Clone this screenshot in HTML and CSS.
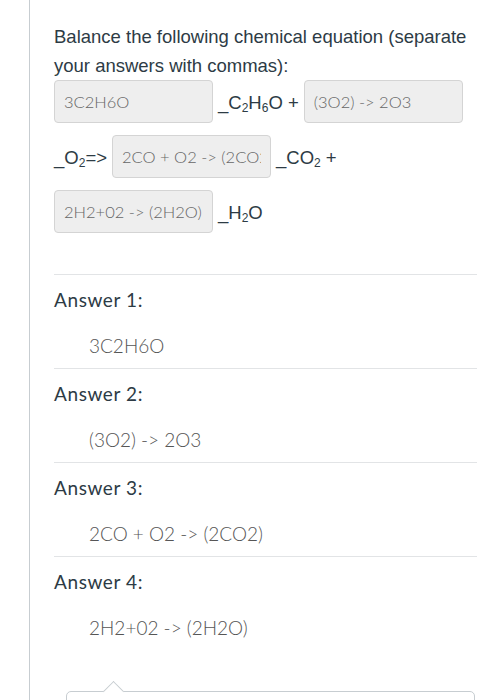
FILE: index.html
```html
<!DOCTYPE html>
<html lang="en">
<head>
    <meta charset="UTF-8">
    <meta name="viewport" content="width=device-width, initial-scale=1.0">
    <title>Quiz Question</title>
    <link rel="stylesheet" href="styles.css">
</head>
<body>
    <div class="page">
        <div class="question">
            <p class="prompt">Balance the following chemical equation (separate your answers with commas):</p>
            <div class="equation">
                <input class="blank" type="text" value="3C2H6O" disabled>
                <span class="term">_C<sub>2</sub>H<sub>6</sub>O +</span>
                <input class="blank" type="text" value="(3O2) -> 2O3" disabled>
                <span class="term">_O<sub>2</sub>=&gt;</span>
                <input class="blank" type="text" value="2CO + O2 -> (2CO2)" disabled>
                <span class="term">_CO<sub>2</sub> +</span>
                <input class="blank" type="text" value="2H2+02 -> (2H2O)" disabled>
                <span class="term">_H<sub>2</sub>O</span>
            </div>
        </div>

        <div class="answers">
            <div class="answer">
                <div class="answer-label">Answer 1:</div>
                <div class="answer-value">3C2H6O</div>
            </div>
            <div class="answer">
                <div class="answer-label">Answer 2:</div>
                <div class="answer-value">(3O2) -&gt; 2O3</div>
            </div>
            <div class="answer">
                <div class="answer-label">Answer 3:</div>
                <div class="answer-value">2CO + O2 -&gt; (2CO2)</div>
            </div>
            <div class="answer">
                <div class="answer-label">Answer 4:</div>
                <div class="answer-value">2H2+02 -&gt; (2H2O)</div>
            </div>
        </div>

        <div class="popover"></div>
    </div>
</body>
</html>
```

FILE: styles.css
```css
body {
    margin: 0;
    background-color: #ffffff;
    font-family: 'Liberation Sans', Arial, sans-serif;
    color: #2d3b45;
    overflow: hidden;
}
.page {
    margin-left: 29px;
    border-left: 1px solid #c7cdd1;
    padding-left: 24px;
    width: 443px;
    height: 700px;
    box-sizing: border-box;
}
.prompt {
    margin: 0;
    padding-top: 22px;
    font-size: 18.5px;
    line-height: 29px;
    color: #2d3b45;
}
.equation {
    display: flex;
    flex-wrap: wrap;
    align-items: center;
    column-gap: 5px;
    row-gap: 12px;
}
.blank {
    box-sizing: border-box;
    width: 159px;
    height: 43px;
    padding: 0 9px;
    background-color: #eeeeee;
    border: 1px solid #d4d4d4;
    border-radius: 4px;
    font-family: Lato, sans-serif;
    font-weight: 300;
    font-size: 16.5px;
    color: #666666;
    -webkit-text-fill-color: #666666;
    opacity: 1;
}
.term {
    font-size: 18.5px;
    color: #2d3b45;
    padding-top: 3px;
}
.term sub {
    font-size: 12px;
    vertical-align: -3px;
    line-height: 0;
}
.answers {
    margin-top: 41px;
    margin-right: -10px;
}
.answer {
    border-top: 1px solid #e2e4e6;
    padding: 13px 0 10px;
}
.answer-label {
    font-family: Lato, sans-serif;
    font-size: 19px;
    line-height: 24px;
    color: #2d3b45;
    letter-spacing: 0.6px;
}
.answer-value {
    margin-top: 22px;
    margin-left: 35px;
    font-family: Lato, sans-serif;
    font-weight: 300;
    font-size: 19px;
    line-height: 24px;
    color: #555555;
}
.popover {
    position: relative;
    margin: 41px 0 0 12px;
    width: 409px;
    height: 20px;
    border: 1px solid #c7cdd1;
    border-radius: 5px;
    background-color: #ffffff;
    box-sizing: border-box;
}
.popover::before {
    content: "";
    position: absolute;
    top: -8px;
    left: 39px;
    width: 14px;
    height: 14px;
    background-color: #ffffff;
    border-top: 1px solid #c7cdd1;
    border-left: 1px solid #c7cdd1;
    transform: rotate(45deg);
}
```
